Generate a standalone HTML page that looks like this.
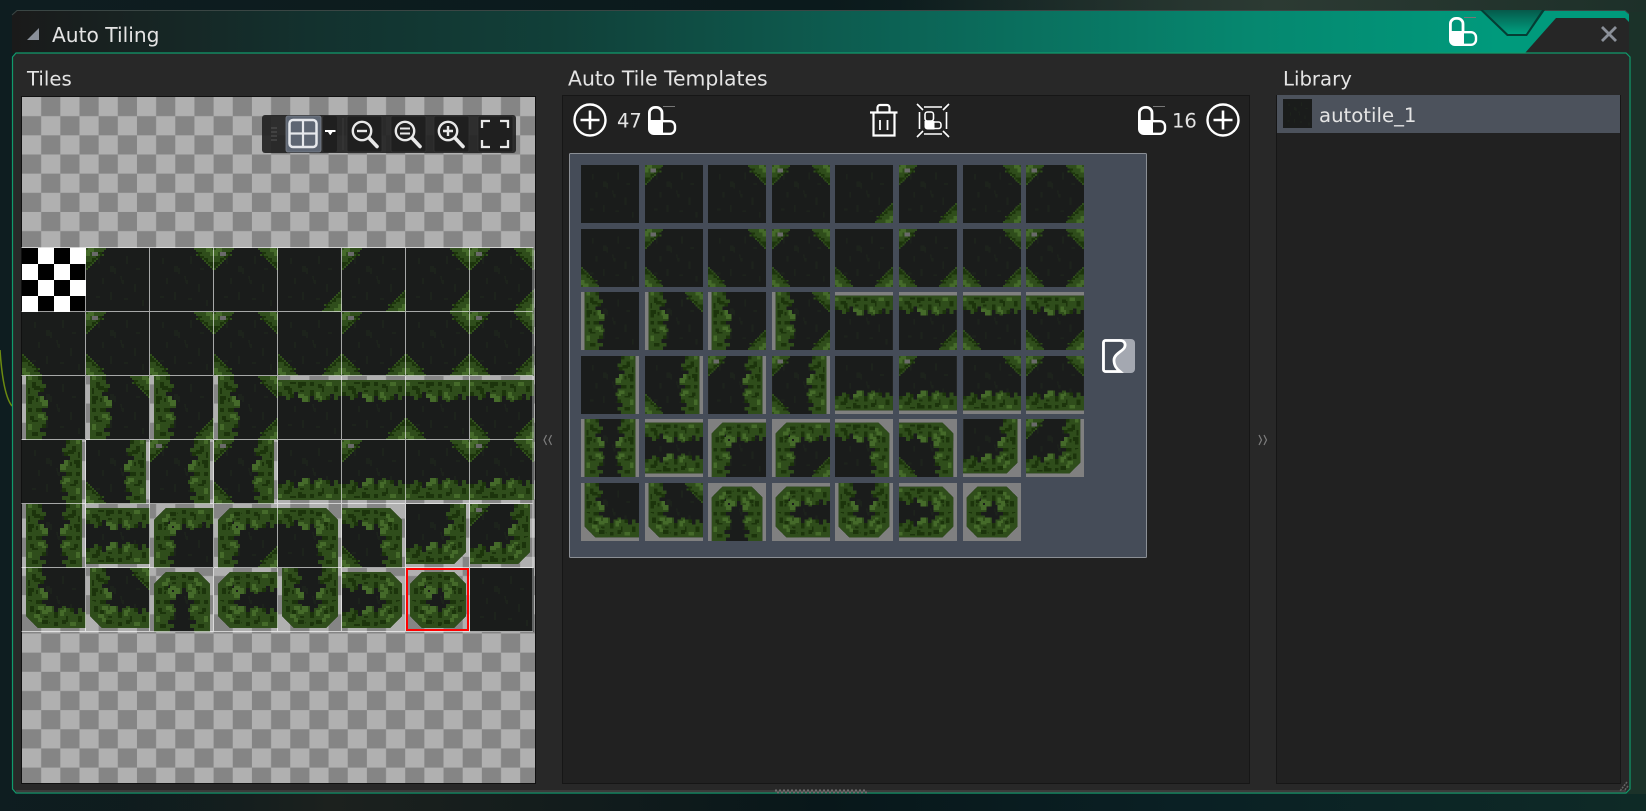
<!DOCTYPE html>
<html lang="en">
<head>
<meta charset="utf-8">
<title>Auto Tiling</title>
<style>
html,body{margin:0;padding:0;width:1646px;height:811px;overflow:hidden;background:#0b1a1c}
svg{display:block;position:absolute;left:0;top:0}
text{font-family:"DejaVu Sans","Liberation Sans",sans-serif;font-size:19.7px;fill:#e4e4e4}
</style>
</head>
<body>
<svg width="1646" height="811" viewBox="0 0 1646 811" xmlns="http://www.w3.org/2000/svg">
<defs>
<linearGradient id="bgA" x1="0" x2="1" y1="0" y2="0"><stop offset="0" stop-color="#0e1d20"/><stop offset=".5" stop-color="#0b1a1c"/><stop offset=".85" stop-color="#1a2c28"/><stop offset="1" stop-color="#1b3229"/></linearGradient>
<linearGradient id="bgT" x1="0" x2="1" y1="0" y2="0"><stop offset="0" stop-color="#2b3a33" stop-opacity="0"/><stop offset=".5" stop-color="#2c3a33"/><stop offset="1" stop-color="#1d3029"/></linearGradient>
<linearGradient id="bgB" x1="0" x2="1" y1="0" y2="0"><stop offset="0" stop-color="#0a1a1a" stop-opacity="0"/><stop offset=".2" stop-color="#1c211e"/><stop offset=".5" stop-color="#08171a"/><stop offset=".72" stop-color="#0a2024"/><stop offset="1" stop-color="#0e2a26"/></linearGradient>
<linearGradient id="tb" gradientUnits="userSpaceOnUse" x1="12" x2="1500" y1="0" y2="0"><stop offset="0" stop-color="#1a1a1a"/><stop offset=".2" stop-color="#13312e"/><stop offset=".37" stop-color="#114039"/><stop offset=".6" stop-color="#0c6355"/><stop offset=".83" stop-color="#06876f"/><stop offset="1" stop-color="#009a7c"/></linearGradient>
<linearGradient id="nt" x1="0" x2="0" y1="0" y2="1"><stop offset="0" stop-color="#065a4b"/><stop offset="1" stop-color="#00a080"/></linearGradient>
<pattern id="chk" patternUnits="userSpaceOnUse" x="22" y="97" width="38.32" height="38.32"><rect width="38.32" height="38.32" fill="#b0b0b0"/><rect x="19.16" width="19.16" height="19.16" fill="#858585"/><rect y="19.16" width="19.16" height="19.16" fill="#858585"/></pattern>

<clipPath id="kL"><polygon points="2,0 32,0 32,32 2,32"/></clipPath>
<clipPath id="kT"><polygon points="0,2 32,2 32,32 0,32"/></clipPath>
<clipPath id="kR"><polygon points="0,0 30,0 30,32 0,32"/></clipPath>
<clipPath id="kB"><polygon points="0,0 32,0 32,30 0,30"/></clipPath>
<clipPath id="kLR"><polygon points="2,0 30,0 30,32 2,32"/></clipPath>
<clipPath id="kTB"><polygon points="0,2 32,2 32,30 0,30"/></clipPath>
<clipPath id="kLT"><polygon points="2,8 8,2 32,2 32,32 2,32"/></clipPath>
<clipPath id="kTR"><polygon points="0,2 24,2 30,8 30,32 0,32"/></clipPath>
<clipPath id="kRB"><polygon points="0,0 30,0 30,24 24,30 0,30"/></clipPath>
<clipPath id="kLB"><polygon points="2,0 32,0 32,30 8,30 2,24"/></clipPath>
<clipPath id="kLTR"><polygon points="2,8 8,2 24,2 30,8 30,32 2,32"/></clipPath>
<clipPath id="kLTB"><polygon points="2,8 8,2 32,2 32,30 8,30 2,24"/></clipPath>
<clipPath id="kLRB"><polygon points="2,0 30,0 30,24 24,30 8,30 2,24"/></clipPath>
<clipPath id="kTRB"><polygon points="0,2 24,2 30,8 30,24 24,30 0,30"/></clipPath>
<clipPath id="kA"><polygon points="2,8 8,2 24,2 30,8 30,24 24,30 8,30 2,24"/></clipPath>

<g id="b"><rect width="32" height="32" fill="#1a1c1b"/><path fill="#1d231c" d="M6 5h1v3h-1zM12 9h2v1h1v3h-1v-1h-2zM20 4h1v4h-1zM25 10h2v1h-2zM8 15h1v3h-1zM17 14h1v2h1v2h-1zM24 18h1v4h-1zM5 24h2v1h-2zM12 22h1v4h-1zM19 25h2v1h-2zM28 26h1v3h-1z"/></g>
<g id="L"><path fill="#2f4d1b" d="M2 0H8V2H10V4H12V6H10V8H8V10H11V12H13V16H10V18H12V20H13V22H12V24H10V26H9V28H12V30H10V32H2Z"/><path fill="#1c340c" d="M5 3h2v2h2v2h-3v-1h-1zM3 10h3v2h-1v2h-2zM7 16h3v2h-3zM4 20h2v2h2v1h-3v-1h-1zM5 28h3v2h-3zM9 6h2v2h-2zM3 6h1v3h-1zM10 24h2v2h-2zM3 16h2v2h-2zM8 0h2v2h-2zM7 11h1v2h-1z"/><path fill="#456a2a" d="M9 10h2v2h2v3h-3v-2h-1zM8 19h3v2h1v1h-2v-1h-2zM3 24h2v3h-2zM3 0h2v2h-2z"/></g>
<use id="R" href="#L" transform="matrix(-1 0 0 1 32 0)"/>
<use id="T" href="#L" transform="matrix(0 1 1 0 0 0)"/>
<use id="B" href="#L" transform="matrix(0 -1 1 0 0 32)"/>
<g id="j0"><polygon fill="#2f4d1b" points="2,8 8,2 15,2 13,6 10,8 8,11 6,13 5,15 2,16"/><path fill="#456a2a" d="M6 7h2v-2h2v2h-1v2h-3z"/><path fill="#1c340c" d="M10 4h3v2h-3zM4 10h2v3h-2zM7 9h2v2h-2z"/></g>
<use id="jTR" href="#j0" transform="matrix(-1 0 0 1 32 0)"/>
<use id="jLB" href="#j0" transform="matrix(1 0 0 -1 0 32)"/>
<use id="jRB" href="#j0" transform="matrix(-1 0 0 -1 32 32)"/>
<g id="c0"><path fill="#2f4d1b" d="M0 0H10V1H9V2H8V3H9V4H7V5H6V6H5V7H4V8H3V9H2V10H1V11H0Z"/><path fill="#1c340c" d="M3 5h2v-1h2v-1h-1v-1h2v2h-1v1h-2v1h-1v1h-1zM0 7h3v1h-1v1h-1v1h-1z"/><path fill="#456a2a" d="M1 0h3v2h-2v2h-2v-3h1z"/></g>
<g id="nw"><use href="#c0"/><rect x="3" y="2" width="3" height="2" fill="#6a6a6a"/></g>
<use id="ne" href="#c0" transform="matrix(-1 0 0 1 32 0)"/>
<use id="sw" href="#c0" transform="matrix(1 0 0 -1 0 32)"/>
<use id="se" href="#c0" transform="matrix(-1 0 0 -1 32 32)"/>

<use id="eN" href="#b"/>
<g id="eL" clip-path="url(#kL)"><use href="#b"/><use href="#L"/></g>
<g id="eT" clip-path="url(#kT)"><use href="#b"/><use href="#T"/></g>
<g id="eR" clip-path="url(#kR)"><use href="#b"/><use href="#R"/></g>
<g id="eB" clip-path="url(#kB)"><use href="#b"/><use href="#B"/></g>
<g id="eLR" clip-path="url(#kLR)"><use href="#b"/><use href="#L"/><use href="#R"/></g>
<g id="eTB" clip-path="url(#kTB)"><use href="#b"/><use href="#T"/><use href="#B"/></g>
<g id="eLT" clip-path="url(#kLT)"><use href="#b"/><use href="#L"/><use href="#T"/><use href="#j0"/></g>
<g id="eTR" clip-path="url(#kTR)"><use href="#b"/><use href="#T"/><use href="#R"/><use href="#jTR"/></g>
<g id="eRB" clip-path="url(#kRB)"><use href="#b"/><use href="#R"/><use href="#B"/><use href="#jRB"/></g>
<g id="eLB" clip-path="url(#kLB)"><use href="#b"/><use href="#L"/><use href="#B"/><use href="#jLB"/></g>
<g id="eLTR" clip-path="url(#kLTR)"><use href="#b"/><use href="#L"/><use href="#T"/><use href="#R"/><use href="#j0"/><use href="#jTR"/></g>
<g id="eLTB" clip-path="url(#kLTB)"><use href="#b"/><use href="#L"/><use href="#T"/><use href="#B"/><use href="#j0"/><use href="#jLB"/></g>
<g id="eLRB" clip-path="url(#kLRB)"><use href="#b"/><use href="#L"/><use href="#R"/><use href="#B"/><use href="#jLB"/><use href="#jRB"/></g>
<g id="eTRB" clip-path="url(#kTRB)"><use href="#b"/><use href="#T"/><use href="#R"/><use href="#B"/><use href="#jTR"/><use href="#jRB"/></g>
<g id="eA" clip-path="url(#kA)"><use href="#b"/><use href="#L"/><use href="#T"/><use href="#R"/><use href="#B"/><use href="#j0"/><use href="#jTR"/><use href="#jLB"/><use href="#jRB"/></g>

<g id="t1"><use href="#b"/><use href="#nw"/></g>
<g id="t2"><use href="#b"/><use href="#ne"/></g>
<g id="t3"><use href="#b"/><use href="#nw"/><use href="#ne"/></g>
<g id="t4"><use href="#b"/><use href="#se"/></g>
<g id="t5"><use href="#b"/><use href="#nw"/><use href="#se"/></g>
<g id="t6"><use href="#b"/><use href="#ne"/><use href="#se"/></g>
<g id="t7"><use href="#b"/><use href="#nw"/><use href="#ne"/><use href="#se"/></g>
<g id="t8"><use href="#b"/><use href="#sw"/></g>
<g id="t9"><use href="#b"/><use href="#sw"/><use href="#nw"/></g>
<g id="t10"><use href="#b"/><use href="#sw"/><use href="#ne"/></g>
<g id="t11"><use href="#b"/><use href="#sw"/><use href="#nw"/><use href="#ne"/></g>
<g id="t12"><use href="#b"/><use href="#sw"/><use href="#se"/></g>
<g id="t13"><use href="#b"/><use href="#sw"/><use href="#se"/><use href="#nw"/></g>
<g id="t14"><use href="#b"/><use href="#sw"/><use href="#se"/><use href="#ne"/></g>
<g id="t15"><use href="#b"/><use href="#sw"/><use href="#se"/><use href="#nw"/><use href="#ne"/></g>
<use id="t16" href="#eL"/>
<g id="t17"><use href="#eL"/><use href="#ne"/></g>
<g id="t18"><use href="#eL"/><use href="#se"/></g>
<g id="t19"><use href="#eL"/><use href="#ne"/><use href="#se"/></g>
<use id="t20" href="#eT"/>
<g id="t21"><use href="#eT"/><use href="#se"/></g>
<g id="t22"><use href="#eT"/><use href="#sw"/></g>
<g id="t23"><use href="#eT"/><use href="#se"/><use href="#sw"/></g>
<use id="t24" href="#eR"/>
<g id="t25"><use href="#eR"/><use href="#sw"/></g>
<g id="t26"><use href="#eR"/><use href="#nw"/></g>
<g id="t27"><use href="#eR"/><use href="#nw"/><use href="#sw"/></g>
<use id="t28" href="#eB"/>
<g id="t29"><use href="#eB"/><use href="#nw"/></g>
<g id="t30"><use href="#eB"/><use href="#ne"/></g>
<g id="t31"><use href="#eB"/><use href="#nw"/><use href="#ne"/></g>
<use id="t32" href="#eLR"/>
<use id="t33" href="#eTB"/>
<use id="t34" href="#eLT"/>
<g id="t35"><use href="#eLT"/><use href="#se"/></g>
<use id="t36" href="#eTR"/>
<g id="t37"><use href="#eTR"/><use href="#sw"/></g>
<use id="t38" href="#eRB"/>
<g id="t39"><use href="#eRB"/><use href="#nw"/></g>
<use id="t40" href="#eLB"/>
<g id="t41"><use href="#eLB"/><use href="#ne"/></g>
<use id="t42" href="#eLTR"/>
<use id="t43" href="#eLTB"/>
<use id="t44" href="#eLRB"/>
<use id="t45" href="#eTRB"/>
<use id="t46" href="#eA"/>

<path id="gr" fill="#808080" d="M0 0h32v32h-32zM35.3 0h32v32h-32zM70.1 0h32v32h-32zM105.4 0h32v32h-32zM140.1 0h32v32h-32zM175.4 0h32v32h-32zM210.8 0h32v32h-32zM245.5 0h32v32h-32z"/>

<g id="lk"><path fill="#fff" d="M0 14h15v15H6a6 6 0 0 1-6-6z"/><path fill="none" stroke="#fff" stroke-width="2.800" d="M1.400 15V7a5.600 5.600 0 0 1 5.600-5.600h1.400a5.600 5.600 0 0 1 5.600 5.600v8"/><path fill="none" stroke="#fff" stroke-width="2.400" d="M14 15.200h8a5 5 0 0 1 5 5v2.600a5 5 0 0 1-5 5h-8"/><path stroke="#777" stroke-width="1" d="M15 .5h12"/></g>
<g id="pls" fill="none" stroke="#fff"><circle r="15.5" stroke-width="2.400"/><path stroke-width="2.600" d="M-9.500 0h19M0-9.500v19"/></g>
<g id="mag" fill="none" stroke="#e8e8e8"><circle r="9.200" stroke-width="2.400"/><path stroke-width="3.600" stroke-linecap="round" d="M7.500 7.500L15 15.500"/></g>
</defs>

<!-- page background -->
<rect width="1646" height="811" fill="url(#bgA)"/>
<rect x="900" y="0" width="746" height="12" fill="url(#bgT)"/>
<rect x="0" y="794" width="1646" height="17" fill="url(#bgB)"/>
<path d="M0 350Q3 395 12 406" fill="none" stroke="#6b8a10" stroke-width="1.500"/>

<!-- title bar -->
<path d="M12 15L17 10H1625L1629 14V53H12Z" fill="url(#tb)"/>
<path d="M12 15L17 10.500H1625L1629 14" fill="none" stroke="#3a4644" stroke-width="1"/>
<polygon points="1480,10 1545,10 1527,36 1507,36" fill="#053d34"/>
<polygon points="1483,10 1542,10 1526,34 1508,34" fill="url(#nt)"/>
<polygon points="1525,53 1556,18 1625,18 1629,22 1629,53" fill="#262626"/>
<polygon points="27,40 39,40 39,28" fill="#8a909a"/>
<text x="52" y="42" style="font-size:20.200px">Auto Tiling</text>
<use href="#lk" x="1449" y="17"/>
<path d="M1602 27l14 14M1616 27l-14 14" stroke="#8b9099" stroke-width="2.800" fill="none"/>

<!-- window body -->
<path d="M12.500 57L16 53H1626L1630 57V789L1626 793H16L12.500 789Z" fill="#282828" stroke="#109a6c" stroke-width="1.200"/>
<rect x="16" y="790" width="1610" height="2.500" fill="#3b3b3b"/>
<path d="M775 790.500H867M777 792.500H867" stroke="#707070" stroke-width="2" stroke-dasharray="2 2"/>
<path d="M1627 782l-7 9M1628 786l-4 5" stroke="#666" stroke-width="1.500" stroke-dasharray="2 1"/>

<text x="27" y="85.500">Tiles</text>
<text x="568" y="85.500" style="font-size:20.400px">Auto Tile Templates</text>
<text x="1283" y="85.500">Library</text>

<!-- canvas -->
<rect x="21" y="96" width="515" height="688" fill="#101010"/>
<rect x="22" y="97" width="513" height="686" fill="url(#chk)" shape-rendering="crispEdges"/>
<g shape-rendering="crispEdges" transform="translate(22 248) scale(2)">
<rect width="32" height="32" fill="#fff"/>
<path fill="#000" d="M0 0h8v8h-8zM16 0h8v8h-8zM8 8h8v8h-8zM24 8h8v8h-8zM0 16h8v8h-8zM16 16h8v8h-8zM8 24h8v8h-8zM24 24h8v8h-8z"/>
<use href="#t1" x="32"/><use href="#t2" x="64"/><use href="#t3" x="96"/><use href="#t4" x="128"/><use href="#t5" x="160"/><use href="#t6" x="192"/><use href="#t7" x="224"/>
<use href="#t8" y="32"/><use href="#t9" x="32" y="32"/><use href="#t10" x="64" y="32"/><use href="#t11" x="96" y="32"/><use href="#t12" x="128" y="32"/><use href="#t13" x="160" y="32"/><use href="#t14" x="192" y="32"/><use href="#t15" x="224" y="32"/>
<use href="#t16" y="64"/><use href="#t17" x="32" y="64"/><use href="#t18" x="64" y="64"/><use href="#t19" x="96" y="64"/><use href="#t20" x="128" y="64"/><use href="#t21" x="160" y="64"/><use href="#t22" x="192" y="64"/><use href="#t23" x="224" y="64"/>
<use href="#t24" y="96"/><use href="#t25" x="32" y="96"/><use href="#t26" x="64" y="96"/><use href="#t27" x="96" y="96"/><use href="#t28" x="128" y="96"/><use href="#t29" x="160" y="96"/><use href="#t30" x="192" y="96"/><use href="#t31" x="224" y="96"/>
<use href="#t32" y="128"/><use href="#t33" x="32" y="128"/><use href="#t34" x="64" y="128"/><use href="#t35" x="96" y="128"/><use href="#t36" x="128" y="128"/><use href="#t37" x="160" y="128"/><use href="#t38" x="192" y="128"/><use href="#t39" x="224" y="128"/>
<use href="#t40" y="160"/><use href="#t41" x="32" y="160"/><use href="#t42" x="64" y="160"/><use href="#t43" x="96" y="160"/><use href="#t44" x="128" y="160"/><use href="#t45" x="160" y="160"/><use href="#t46" x="192" y="160"/><use href="#eN" x="224" y="160"/>
</g>
<path d="M21.500 247.500H533.500M21.500 311.500H533.500M21.500 375.500H533.500M21.500 439.500H533.500M21.500 503.500H533.500M21.500 567.500H533.500M21.500 631.500H533.500M85.500 247.500V631.500M149.500 247.500V631.500M213.500 247.500V631.500M277.500 247.500V631.500M341.500 247.500V631.500M405.500 247.500V631.500M469.500 247.500V631.500M533 247.500V631.500" stroke="#fff" stroke-opacity=".62" stroke-width="1" fill="none"/>
<rect x="407" y="569" width="61" height="61" fill="none" stroke="#f00" stroke-width="2"/>

<!-- toolbar -->
<rect x="262" y="115" width="254" height="38" rx="3" fill="#232323" fill-opacity=".93"/>
<path d="M271 128h6M271 132h6M271 136h6M271 140h6" stroke="#555" stroke-width="1"/>
<rect x="286" y="116" width="35" height="36" rx="2" fill="#5e6673" stroke="#7a808a" stroke-width=".8"/>
<rect x="289.500" y="120" width="27" height="27" rx="3.500" fill="#5e6673" stroke="#e6e8ec" stroke-width="2.500"/>
<path d="M303 120v27M289.500 133.500h27" stroke="#e6e8ec" stroke-width="2.200"/>
<rect x="323" y="116" width="14" height="36" rx="2" fill="#1f1f1f"/>
<path d="M325 130h10.500v2h-3l-2 3h-.500l-2-3h-3z" fill="#fff"/>
<path d="M343 118v32" stroke="#3a3a3a" stroke-width="1"/>
<rect x="347" y="116" width="35" height="36" rx="2" fill="#1f1f1f" stroke="#333" stroke-width=".8"/>
<rect x="391" y="116" width="35" height="36" rx="2" fill="#1f1f1f" stroke="#333" stroke-width=".8"/>
<rect x="434" y="116" width="35" height="36" rx="2" fill="#1f1f1f" stroke="#333" stroke-width=".8"/>
<rect x="478" y="116" width="35" height="36" rx="2" fill="#1f1f1f" stroke="#333" stroke-width=".8"/>
<use href="#mag" x="362" y="131"/><path d="M357 131h10" stroke="#e8e8e8" stroke-width="2.400"/>
<use href="#mag" x="405" y="131"/><path d="M400 128.500h10M400 133.500h10" stroke="#e8e8e8" stroke-width="2"/>
<use href="#mag" x="448" y="131"/><path d="M443 131h10M448 126v10" stroke="#e8e8e8" stroke-width="2.400"/>
<path d="M482 128v-7h8M500 121h8v7M482 140v7h8M500 147h8v-7" fill="none" stroke="#e8e8e8" stroke-width="2.300"/>

<!-- template panel -->
<rect x="562.500" y="95.500" width="687" height="688" fill="#212121" stroke="#161616"/>
<use href="#pls" x="590" y="120"/>
<text x="617" y="127.500" style="font-size:19.500px">47</text>
<use href="#lk" x="648" y="106"/>
<!-- trash -->
<g fill="none" stroke="#fff" stroke-width="2.200">
<path d="M870 112.500H897.500"/>
<path d="M877.500 112V107.500a2.500 2.500 0 0 1 2.500-2.500h7a2.500 2.500 0 0 1 2.500 2.500V112"/>
<path d="M873.500 113V135.500H894.500V113"/>
<path d="M880 120V130M887.500 120V130" stroke-width="1.800"/>
</g>
<!-- fit-lock icon -->
<g fill="none" stroke="#fff" stroke-width="1.600">
<path d="M917 104l6 6M949 104l-6 6M917 137l6-6M949 137l-6-6"/>
<path d="M924 107H942M924 134H942M919.500 112V129M946.500 112V129"/>
<rect x="925" y="112" width="8.500" height="9" rx="2.500"/>
<path d="M933.500 122h5a2.500 2.500 0 0 1 2.500 2.500v1.500a2.500 2.500 0 0 1-2.500 2.500h-5"/>
</g>
<path d="M924.500 121h10v8.500h-7a3 3 0 0 1-3-3z" fill="#fff"/>
<use href="#lk" x="1138" y="106"/>
<text x="1172" y="127.500" style="font-size:19.500px">16</text>
<use href="#pls" x="1223" y="120"/>

<rect x="569.500" y="153.500" width="577" height="404" rx="1" fill="#454c58" stroke="#8b8f95"/>
<g shape-rendering="crispEdges">
<g transform="translate(581 165) scale(1.8125)"><use href="#gr"/><use href="#eN"/><use href="#t1" x="35.3"/><use href="#t2" x="70.1"/><use href="#t3" x="105.4"/><use href="#t4" x="140.1"/><use href="#t5" x="175.4"/><use href="#t6" x="210.8"/><use href="#t7" x="245.5"/></g>
<g transform="translate(581 229) scale(1.8125)"><use href="#gr"/><use href="#t8"/><use href="#t9" x="35.3"/><use href="#t10" x="70.1"/><use href="#t11" x="105.4"/><use href="#t12" x="140.1"/><use href="#t13" x="175.4"/><use href="#t14" x="210.8"/><use href="#t15" x="245.5"/></g>
<g transform="translate(581 292) scale(1.8125)"><use href="#gr"/><use href="#t16"/><use href="#t17" x="35.3"/><use href="#t18" x="70.1"/><use href="#t19" x="105.4"/><use href="#t20" x="140.1"/><use href="#t21" x="175.4"/><use href="#t22" x="210.8"/><use href="#t23" x="245.5"/></g>
<g transform="translate(581 356) scale(1.8125)"><use href="#gr"/><use href="#t24"/><use href="#t25" x="35.3"/><use href="#t26" x="70.1"/><use href="#t27" x="105.4"/><use href="#t28" x="140.1"/><use href="#t29" x="175.4"/><use href="#t30" x="210.8"/><use href="#t31" x="245.5"/></g>
<g transform="translate(581 419) scale(1.8125)"><use href="#gr"/><use href="#t32"/><use href="#t33" x="35.3"/><use href="#t34" x="70.1"/><use href="#t35" x="105.4"/><use href="#t36" x="140.1"/><use href="#t37" x="175.4"/><use href="#t38" x="210.8"/><use href="#t39" x="245.5"/></g>
<g transform="translate(581 483) scale(1.8125)"><use href="#gr"/><use href="#t40"/><use href="#t41" x="35.3"/><use href="#t42" x="70.1"/><use href="#t43" x="105.4"/><use href="#t44" x="140.1"/><use href="#t45" x="175.4"/><use href="#t46" x="210.8"/></g>
<rect x="1026" y="483" width="60" height="60" fill="#454c58"/>
</g>
<!-- swap icon -->
<g transform="translate(1102 339)">
<rect width="33" height="34" rx="4" fill="#a4a8b1"/>
<path d="M1.500 3.500a2 2 0 0 1 2-2H18C22.500 1.500 24 5 22.500 8.500C21 12 12 15 12 21C12 27 15 30 18 32.500H3.500a2 2 0 0 1-2-2z" fill="#454c58" stroke="#fff" stroke-width="2.800"/>
</g>

<!-- collapse chevrons -->
<path d="M546.500 435l-2.500 5 2.500 5M551.500 435l-2.500 5 2.500 5" fill="none" stroke="#7d7d7d" stroke-width="1.200"/>
<path d="M1259 435l2.500 5-2.500 5M1264 435l2.500 5-2.500 5" fill="none" stroke="#7d7d7d" stroke-width="1.200"/>

<!-- library -->
<rect x="1276.500" y="95.500" width="344" height="688" fill="#212121" stroke="#161616"/>
<rect x="1277" y="95" width="343" height="38" fill="#4c525c"/>
<g transform="translate(1283 99) scale(.906)" shape-rendering="crispEdges"><use href="#b"/></g>
<text x="1319" y="122">autotile_1</text>
</svg>
</body>
</html>
